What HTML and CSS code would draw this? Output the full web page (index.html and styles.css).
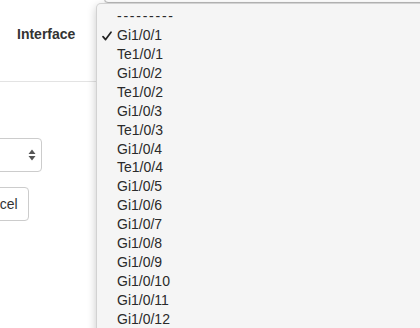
FILE: index.html
```html
<!DOCTYPE html>
<html>
<head>
<meta charset="utf-8">
<link rel="stylesheet" href="styles.css">
</head>
<body>
<div class="page">
  <div class="header">
    <span class="label">Interface</span>
  </div>
  <div class="form">
    <div class="select">
      <svg class="arrows" width="8" height="12" viewBox="0 0 8 12"><path d="M4 0.5 L7.5 5 L0.5 5 Z M4 11.5 L7.5 7 L0.5 7 Z" fill="#555"/></svg>
    </div>
    <button class="btn">Cancel</button>
  </div>

  <div class="anchor"></div>
  <ul class="menu">
    <li class="dashes">---------</li>
    <li class="checked"><svg class="check" width="10" height="10" viewBox="0 0 10 10"><path d="M1 5.6 L3.6 8.6 L9 1.2" fill="none" stroke="#222" stroke-width="1.7" stroke-linecap="round" stroke-linejoin="round"/></svg>Gi1/0/1</li>
    <li>Te1/0/1</li>
    <li>Gi1/0/2</li>
    <li>Te1/0/2</li>
    <li>Gi1/0/3</li>
    <li>Te1/0/3</li>
    <li>Gi1/0/4</li>
    <li>Te1/0/4</li>
    <li>Gi1/0/5</li>
    <li>Gi1/0/6</li>
    <li>Gi1/0/7</li>
    <li>Gi1/0/8</li>
    <li>Gi1/0/9</li>
    <li>Gi1/0/10</li>
    <li>Gi1/0/11</li>
    <li>Gi1/0/12</li>
  </ul>
</div>
</body>
</html>
```
FILE: styles.css
```css
html, body {
  margin: 0;
  padding: 0;
  background: #fff;
  overflow: hidden;
}
body {
  font-family: "Liberation Sans", Arial, sans-serif;
  font-size: 14px;
  color: #333;
}
.page {
  position: relative;
  width: 420px;
  height: 328px;
  overflow: hidden;
}
.header {
  height: 81px;
  border-bottom: 1px solid #e3e3e3;
  box-sizing: content-box;
  padding-left: 17px;
}
.label {
  display: block;
  padding-top: 24px;
  line-height: 20px;
  font-weight: bold;
  color: #333;
}
.form {
  display: flex;
  flex-direction: column;
  align-items: flex-start;
}
.select {
  margin-top: 56px;
  margin-left: -158px;
  width: 200px;
  height: 34px;
  box-sizing: border-box;
  border: 1px solid #ccc;
  border-radius: 4px;
  background: #fff;
  display: flex;
  align-items: center;
  justify-content: flex-end;
  padding-right: 5px;
}
.arrows {
  display: block;
}
.btn {
  margin-top: 15px;
  margin-left: -39px;
  width: 68px;
  height: 34px;
  box-sizing: border-box;
  border: 1px solid #ccc;
  border-radius: 4px;
  background: #fff;
  font-family: "Liberation Sans", Arial, sans-serif;
  font-size: 14px;
  color: #333;
  padding: 0 12px;
  text-align: right;
}
.anchor {
  position: absolute;
  left: 104px;
  top: -30px;
  width: 340px;
  height: 31px;
  border: 1px solid #b9b9b9;
  border-radius: 4px;
  background: #fff;
  box-shadow: 0 1px 1px rgba(0,0,0,0.08);
}
.menu {
  position: absolute;
  left: 96px;
  top: 3px;
  width: 360px;
  height: 360px;
  margin: 0;
  padding: 3.3px 0 0 0;
  list-style: none;
  background: #f5f5f5;
  border: 1px solid rgba(0,0,0,0.14);
  border-radius: 5px;
  box-shadow: 0 3px 10px rgba(0,0,0,0.22);
  box-sizing: border-box;
}
.menu li {
  position: relative;
  height: 18.9px;
  line-height: 18.9px;
  padding-left: 20px;
  color: #2a2a2a;
  white-space: nowrap;
}
.menu li.dashes {
  letter-spacing: 1.75px;
}
.check {
  position: absolute;
  left: 5px;
  top: 5px;
}
```
